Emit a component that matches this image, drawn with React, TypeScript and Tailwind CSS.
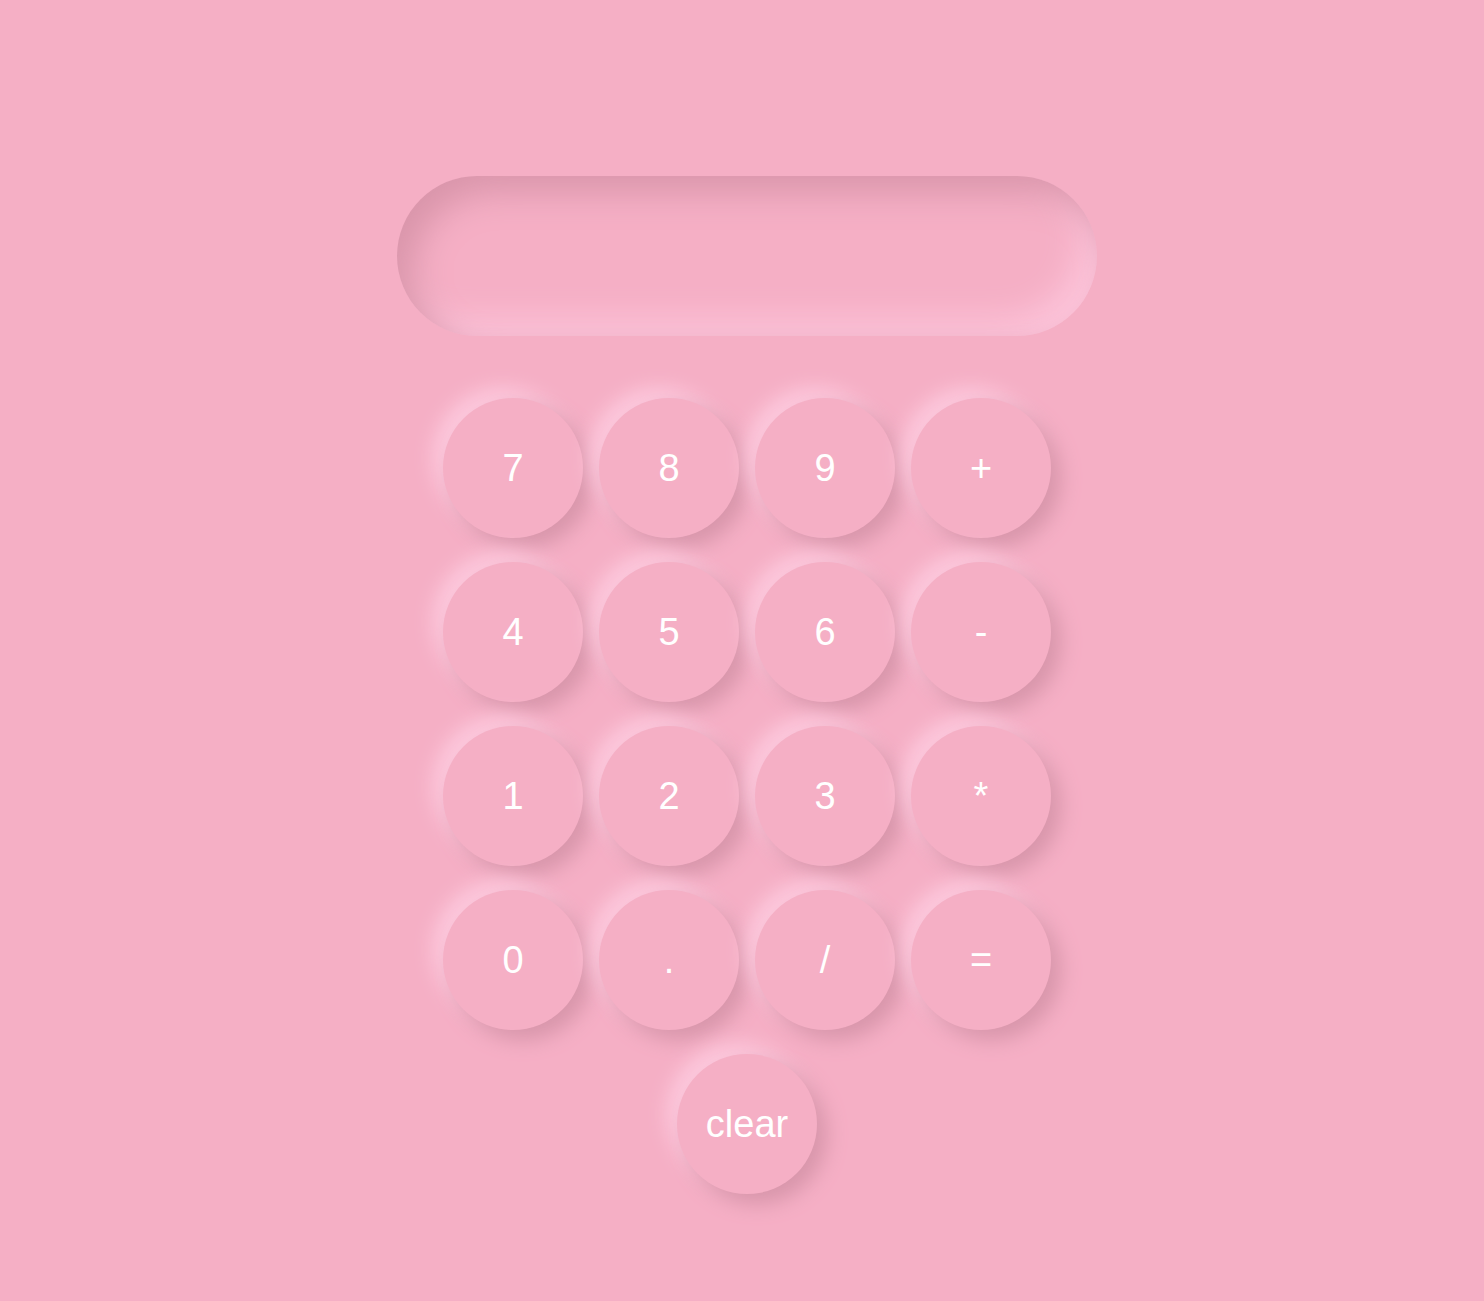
import React from "react";

const keys = ["7", "8", "9", "+", "4", "5", "6", "-", "1", "2", "3", "*", "0", ".", "/", "="];

function Key({ label }: { label: string }) {
  return (
    <button
      className="w-[140px] h-[140px] rounded-full bg-[#f5afc5] text-white text-[38px] leading-none flex items-center justify-center shadow-[10px_10px_20px_#d896ab,-10px_-10px_20px_#fdcade]"
      style={{ fontFamily: '"Liberation Sans", Arial, sans-serif' }}
    >
      {label}
    </button>
  );
}

export default function App() {
  return (
    <div className="min-h-[1301px] w-full bg-[#f5afc5] pl-[10px] pt-[176px] flex flex-col items-center">
      <div className="w-[700px] h-[160px] rounded-full bg-[#f5afc5] shadow-[inset_16px_16px_34px_#d995aa,inset_-16px_-16px_34px_#fdc6dc]" />
      <div className="mt-[62px] grid grid-cols-[repeat(4,140px)] gap-x-[16px] gap-y-[24px]">
        {keys.map((k) => (
          <Key key={k} label={k} />
        ))}
      </div>
      <div className="mt-[24px]">
        <Key label="clear" />
      </div>
    </div>
  );
}
